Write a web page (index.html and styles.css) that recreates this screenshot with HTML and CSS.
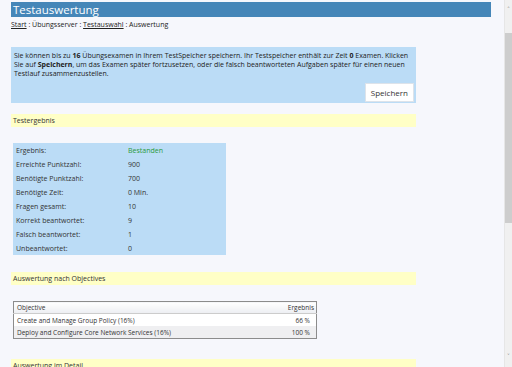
FILE: index.html
```html
<!DOCTYPE html>
<html lang="de">
<head>
    <meta charset="UTF-8">
    <meta name="viewport" content="width=device-width, initial-scale=1.0">
    <title>Testauswertung</title>
    <link rel="stylesheet" href="styles.css">
</head>
<body>
    <div class="page">
        <!-- Kopfzeile -->
        <div class="titlebar">Testauswertung</div>
        <div class="crumbs">
            <a href="#">Start</a> : Übungsserver : <a href="#">Testauswahl</a> : Auswertung
        </div>

        <!-- Hinweis zum Speichern -->
        <div class="info">
            <p>Sie können bis zu <b>16</b> Übungsexamen in Ihrem TestSpeicher speichern. Ihr Testspeicher enthält zur Zeit <b>0</b> Examen. Klicken Sie auf <b>Speichern</b>, um das Examen später fortzusetzen, oder die falsch beantworteten Aufgaben später für einen neuen Testlauf zusammenzustellen.</p>
            <div class="actions">
                <button>Speichern</button>
            </div>
        </div>

        <div class="section">Testergebnis</div>

        <table class="results">
            <tr><td>Ergebnis:</td><td class="passed">Bestanden</td></tr>
            <tr><td>Erreichte Punktzahl:</td><td>900</td></tr>
            <tr><td>Benötigte Punktzahl:</td><td>700</td></tr>
            <tr><td>Benötigte Zeit:</td><td>0 Min.</td></tr>
            <tr><td>Fragen gesamt:</td><td>10</td></tr>
            <tr><td>Korrekt beantwortet:</td><td>9</td></tr>
            <tr><td>Falsch beantwortet:</td><td>1</td></tr>
            <tr><td>Unbeantwortet:</td><td>0</td></tr>
        </table>

        <div class="section">Auswertung nach Objectives</div>

        <table class="objectives">
            <thead>
                <tr><th>Objective</th><th class="num">Ergebnis</th></tr>
            </thead>
            <tbody>
                <tr><td>Create and Manage Group Policy (16%)</td><td class="num">66 %</td></tr>
                <tr><td>Deploy and Configure Core Network Services (16%)</td><td class="num">100 %</td></tr>
            </tbody>
        </table>

        <div class="section">Auswertung im Detail</div>
    </div>

    <!-- Scrollleiste -->
    <div class="scrollbar">
        <div class="arrow">&#708;</div>
        <div class="track-top"></div>
        <div class="thumb"></div>
        <div class="track"></div>
        <div class="arrow">&#709;</div>
    </div>
</body>
</html>
```

FILE: styles.css
```css
/* Allgemein */
body {
    margin: 0;
    height: 100vh;
    overflow: hidden;
    display: flex;
    background-color: #f6f7fc;
    color: #333;
    font-family: 'Open Sans', 'Noto Sans', sans-serif;
    font-size: 7px;
}

.page {
    flex: 1;
    padding: 2px 13px 0 11px;
}

/* Kopfzeile */
.titlebar {
    height: 15px;
    line-height: 15px;
    padding-left: 2px;
    background-color: #4586b8;
    color: #fff;
    font-size: 11.5px;
}

.crumbs {
    margin-top: 3px;
    color: #222;
    font-size: 7px;
}

.crumbs a {
    color: #222;
}

/* Hinweisbox */
.info {
    width: 400px;
    margin-top: 18px;
    padding: 4px 2px 0 3px;
    background-color: #bbdcf6;
    color: #222;
}

.info p {
    margin: 0;
    line-height: 9px;
}

.actions {
    display: flex;
    justify-content: flex-end;
    margin-top: 5px;
    padding-bottom: 1px;
}

.actions button {
    height: 19px;
    padding: 0 5px;
    background-color: #fff;
    border: 1px solid #dde3ea;
    color: #333;
    font-family: inherit;
    font-size: 8px;
}

/* Abschnittsüberschriften */
.section {
    width: 403px;
    height: 13px;
    line-height: 13px;
    padding-left: 2px;
    margin-top: 11px;
    background-color: #ffffc6;
    color: #333;
}

/* Ergebnis-Tabelle */
.results {
    margin: 16px 0 17px 2px;
    width: 213px;
    border-collapse: collapse;
    background-color: #bbdcf6;
}

.results td {
    height: 14px;
    padding: 0 3px;
}

.results td:first-child {
    width: 106px;
}

.results .passed {
    color: #2a9a3c;
}

/* Objectives */
.objectives {
    margin: 16px 0 20px 2px;
    width: 304px;
    border-collapse: collapse;
    border: 1px solid #8c8c8c;
    font-size: 6.5px;
}

.objectives th {
    height: 11px;
    padding: 0 3px;
    font-weight: normal;
    text-align: left;
    background: linear-gradient(#fff, #eceef2);
    border-bottom: 1px solid #ccc;
}

.objectives td {
    height: 12px;
    padding: 0 6px 0 3px;
    background-color: #fff;
}

.objectives tbody tr:nth-child(2) td {
    background-color: #efeff1;
}

.objectives .num {
    text-align: right;
}

.objectives th.num {
    padding-right: 2px;
}

/* Scrollleiste */
.scrollbar {
    width: 7px;
    display: flex;
    flex-direction: column;
    background-color: #f0f0f0;
    border-left: 1px solid #e6e6e6;
}

.arrow {
    height: 20px;
    line-height: 20px;
    text-align: center;
    font-size: 7px;
    color: #555;
}

.track-top {
    height: 13px;
}

.thumb {
    height: 190px;
    background-color: #cdcdcd;
}

.track {
    flex: 1;
}
```
